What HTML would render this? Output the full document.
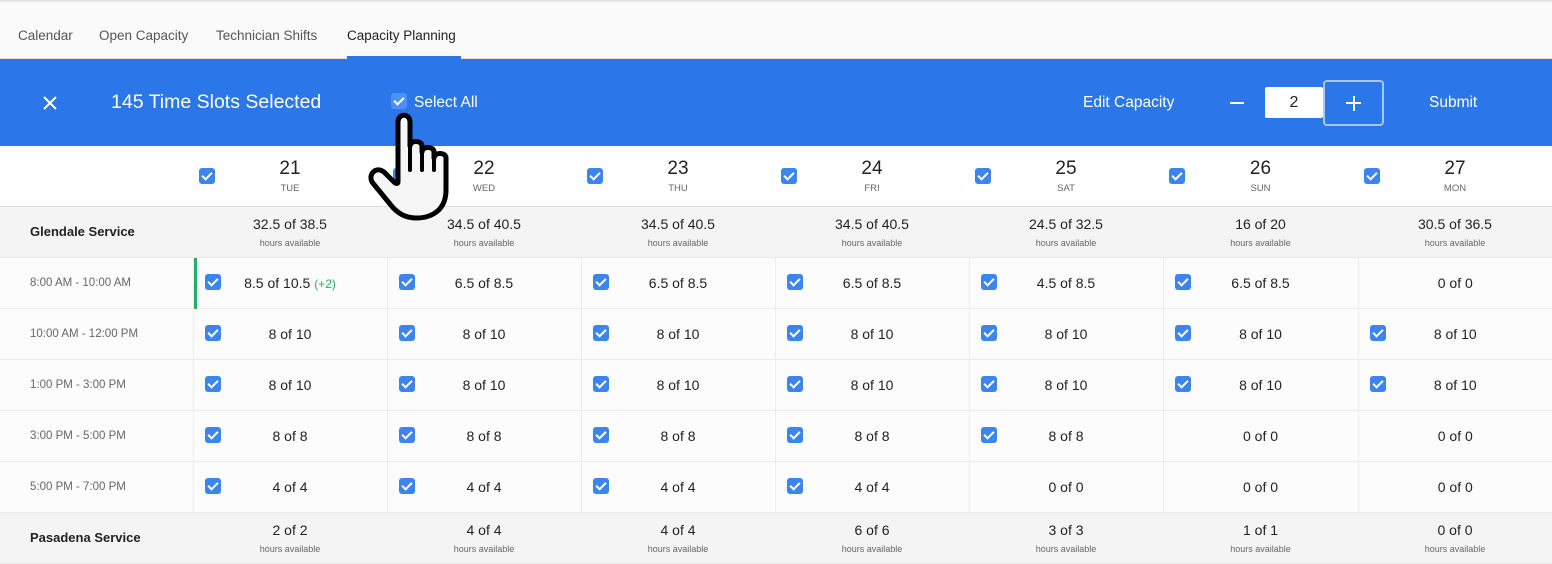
<!DOCTYPE html>
<html><head><style>
*{box-sizing:border-box;margin:0;padding:0}
body{width:1552px;height:563px;overflow:hidden;background:#fff;font-family:"Liberation Sans",sans-serif;color:#222;position:relative}
.topline{position:absolute;top:0;left:0;right:0;height:3px;background:linear-gradient(#ddd,#fafafa)}
.tabs{position:absolute;top:0;left:0;width:1552px;height:59px;background:#fafafa;border-bottom:1px solid #e2e2e2}
.tab{position:absolute;top:28px;font-size:13.5px;color:#555}
.tab.on{color:#222}
.tabline{position:absolute;left:347px;top:56px;width:114px;height:3px;background:#2b76e8}
.bar{position:absolute;top:59px;left:0;width:1552px;height:88px;background:#2b76e8;color:#fff}
.bar .t{position:absolute;font-size:15.5px}
.cb{display:inline-block;width:16px;height:16px;border-radius:3px;background:#3d85ee;position:relative;vertical-align:middle}
.cb:after{content:"";position:absolute;left:5px;top:2px;width:4px;height:8px;border:solid #fff;border-width:0 2px 2px 0;transform:rotate(45deg)}
table{position:absolute;top:146px;left:0;border-collapse:collapse;table-layout:fixed;width:1552px}
td{position:relative;text-align:center;font-size:14px;padding:0}
tr.hd td{height:60px;background:#fff;border-bottom:1px solid #ddd}
tr.hd .n{font-size:19px;display:block;margin-top:0px}
tr.hd .d{font-size:9.5px;color:#666;display:block;margin-top:3px}
tr.hd .cb{position:absolute;left:6px;top:22px}
tr.sv td{height:51px;background:#f4f4f4;border-bottom:1px solid #e6e6e6}
tr.sv td .h{display:block;font-size:9px;color:#666;margin-top:6px}
tr.sv td.l{text-align:left;padding-left:30px;font-weight:bold;font-size:13px}
tr.sl td{height:51px;background:#fcfcfc;border-bottom:1px solid #ececec;border-left:1px solid #ececec}
tr.sl td.l{text-align:left;padding-left:30px;font-size:11.5px;color:#666;border-left:none}
tr.sl .cb{position:absolute;left:11px;top:16px}
.g{color:#27ae60}
</style></head><body>
<div class="tabs">
<div class="topline"></div>
<span class="tab" style="left:18px">Calendar</span>
<span class="tab" style="left:99px">Open Capacity</span>
<span class="tab" style="left:216px">Technician Shifts</span>
<span class="tab on" style="left:347px">Capacity Planning</span>
<div class="tabline"></div>
</div>
<div class="bar">
<svg style="position:absolute;left:42px;top:36px" width="16" height="16"><path d="M2 2L14 14M14 2L2 14" stroke="#fff" stroke-width="2"/></svg>
<span class="t" style="left:111px;top:32px;font-size:19.5px">145 Time Slots Selected</span>
<span class="cb" style="position:absolute;left:391px;top:34px;background:#4d90f2"></span>
<span class="t" style="left:414px;top:35px">Select All</span>
<span class="t" style="left:1083px;top:35px">Edit Capacity</span>
<div style="position:absolute;left:1230px;top:43px;width:14px;height:2px;background:#fff"></div>
<div style="position:absolute;left:1265px;top:28px;width:58px;height:31px;background:#fff;border-radius:2px;color:#222;font-size:16px;text-align:center;line-height:31px">2</div>
<div style="position:absolute;left:1323px;top:21px;width:61px;height:46px;border:2px solid #a9c8f7;border-radius:4px"></div>
<div style="position:absolute;left:1346px;top:43px;width:15px;height:2px;background:#fff"></div>
<div style="position:absolute;left:1352.5px;top:36.5px;width:2px;height:15px;background:#fff"></div>
<span class="t" style="left:1429px;top:35px">Submit</span>
</div>
<table>
<colgroup><col style="width:193px"><col style="width:194px"><col style="width:194px"><col style="width:194px"><col style="width:194px"><col style="width:194px"><col style="width:195px"><col style="width:194px"></colgroup>
<tr class="hd"><td></td>
<td><span class="cb"></span><span class="n">21</span><span class="d">TUE</span></td>
<td><span class="cb"></span><span class="n">22</span><span class="d">WED</span></td>
<td><span class="cb"></span><span class="n">23</span><span class="d">THU</span></td>
<td><span class="cb"></span><span class="n">24</span><span class="d">FRI</span></td>
<td><span class="cb"></span><span class="n">25</span><span class="d">SAT</span></td>
<td><span class="cb"></span><span class="n">26</span><span class="d">SUN</span></td>
<td><span class="cb"></span><span class="n">27</span><span class="d">MON</span></td></tr>
<tr class="sv"><td class="l">Glendale Service</td>
<td>32.5 of 38.5<span class="h">hours available</span></td>
<td>34.5 of 40.5<span class="h">hours available</span></td>
<td>34.5 of 40.5<span class="h">hours available</span></td>
<td>34.5 of 40.5<span class="h">hours available</span></td>
<td>24.5 of 32.5<span class="h">hours available</span></td>
<td>16 of 20<span class="h">hours available</span></td>
<td>30.5 of 36.5<span class="h">hours available</span></td></tr>
<tr class="sl"><td class="l">8:00 AM - 10:00 AM</td>
<td><div style="position:absolute;left:0;top:0;width:3px;height:51px;background:#27ae60"></div><span class="cb"></span>8.5 of 10.5 <span class="g" style="font-size:12px">(+2)</span></td>
<td><span class="cb"></span>6.5 of 8.5</td><td><span class="cb"></span>6.5 of 8.5</td><td><span class="cb"></span>6.5 of 8.5</td><td><span class="cb"></span>4.5 of 8.5</td><td><span class="cb"></span>6.5 of 8.5</td><td>0 of 0</td></tr>
<tr class="sl"><td class="l">10:00 AM - 12:00 PM</td>
<td><span class="cb"></span>8 of 10</td><td><span class="cb"></span>8 of 10</td><td><span class="cb"></span>8 of 10</td><td><span class="cb"></span>8 of 10</td><td><span class="cb"></span>8 of 10</td><td><span class="cb"></span>8 of 10</td><td><span class="cb"></span>8 of 10</td></tr>
<tr class="sl"><td class="l">1:00 PM - 3:00 PM</td>
<td><span class="cb"></span>8 of 10</td><td><span class="cb"></span>8 of 10</td><td><span class="cb"></span>8 of 10</td><td><span class="cb"></span>8 of 10</td><td><span class="cb"></span>8 of 10</td><td><span class="cb"></span>8 of 10</td><td><span class="cb"></span>8 of 10</td></tr>
<tr class="sl"><td class="l">3:00 PM - 5:00 PM</td>
<td><span class="cb"></span>8 of 8</td><td><span class="cb"></span>8 of 8</td><td><span class="cb"></span>8 of 8</td><td><span class="cb"></span>8 of 8</td><td><span class="cb"></span>8 of 8</td><td>0 of 0</td><td>0 of 0</td></tr>
<tr class="sl"><td class="l">5:00 PM - 7:00 PM</td>
<td><span class="cb"></span>4 of 4</td><td><span class="cb"></span>4 of 4</td><td><span class="cb"></span>4 of 4</td><td><span class="cb"></span>4 of 4</td><td>0 of 0</td><td>0 of 0</td><td>0 of 0</td></tr>
<tr class="sv"><td class="l">Pasadena Service</td>
<td>2 of 2<span class="h">hours available</span></td>
<td>4 of 4<span class="h">hours available</span></td>
<td>4 of 4<span class="h">hours available</span></td>
<td>6 of 6<span class="h">hours available</span></td>
<td>3 of 3<span class="h">hours available</span></td>
<td>1 of 1<span class="h">hours available</span></td>
<td>0 of 0<span class="h">hours available</span></td></tr>
</table>
<svg style="position:absolute;left:366px;top:110px" width="92" height="112" viewBox="0 0 92 112">
<path d="M32 12 C32 3 44 3 44 12 L44 36 C44 30 56 30 56 36 L56 42 C56 36 68 36 68 42 L68 48 C68 42 80 42 80 48 L80 80 C80 100 66 108 50 108 C38 108 30 102 24 94 L6 72 C2 64 10 56 18 62 L28 72 C30 74 32 74 32 72 Z" fill="#f6f6f6" stroke="#000" stroke-width="5" stroke-linejoin="round"/>
<path d="M44 36 L44 60 M56 42 L56 60 M68 48 L68 60" stroke="#000" stroke-width="4" stroke-linecap="round"/>
</svg>
</body></html>
